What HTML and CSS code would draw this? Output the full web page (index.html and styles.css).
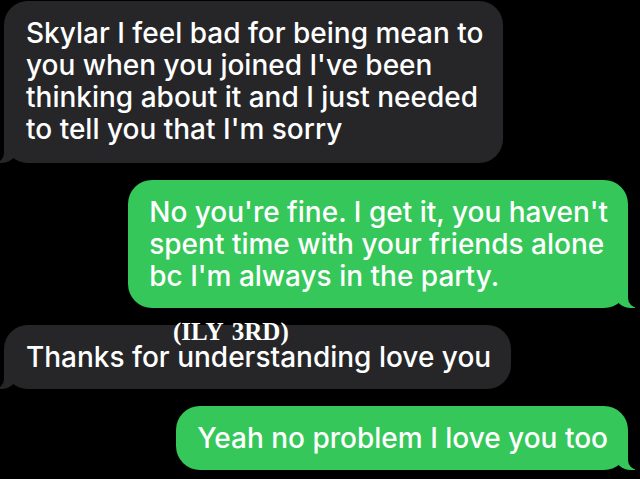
FILE: index.html
```html
<!DOCTYPE html>
<html lang="en">
<head>
  <meta charset="UTF-8">
  <title>Messages</title>
  <link rel="stylesheet" href="styles.css">
</head>
<body>
  <div class="thread">
    <div class="bubble received">
      Skylar I feel bad for being mean to<br>
      you when you joined I've been<br>
      thinking about it and I just needed<br>
      to tell you that I'm sorry
    </div>
    <div class="bubble sent">
      No you're fine. I get it, you haven't<br>
      spent time with your friends alone<br>
      bc I'm always in the party.
    </div>
    <div class="bubble received">
      <span class="caption">(ILY 3RD)</span>
      Thanks for understanding love you
    </div>
    <div class="bubble sent">
      Yeah no problem I love you too
    </div>
  </div>
</body>
</html>
```

FILE: styles.css
```css
html, body {
  margin: 0;
  background: #000;
}
body {
  font-family: Inter, 'Noto Sans', sans-serif;
  color: #fff;
  overflow: hidden;
}
.thread {
  display: flex;
  flex-direction: column;
  gap: 17px;
  padding: 1px 12px 0 4px;
}
.bubble {
  position: relative;
  font-size: 28px;
  font-weight: 500;
  line-height: 32px;
  padding: 16px 20px 16px 22px;
  border-radius: 24px;
  width: fit-content;
  white-space: nowrap;
}
.bubble:first-child {
  padding-bottom: 18px;
}
.received {
  background: #262628;
  align-self: flex-start;
}
.sent {
  background: #35c759;
  align-self: flex-end;
  padding-left: 21px;
}
/* tails */
.bubble::before,
.bubble::after {
  content: "";
  position: absolute;
  bottom: 0;
  height: 24px;
}
.received::before {
  left: -7px;
  width: 20px;
  background: #262628;
  border-bottom-right-radius: 16px 14px;
}
.received::after {
  left: -26px;
  width: 26px;
  background: #000;
  border-bottom-right-radius: 10px;
}
.sent::before {
  right: -7px;
  width: 20px;
  background: #35c759;
  border-bottom-left-radius: 16px 14px;
}
.sent::after {
  right: -26px;
  width: 26px;
  background: #000;
  border-bottom-left-radius: 10px;
}
.caption {
  position: absolute;
  left: 169px;
  top: -3px;
  font-family: 'Liberation Serif', serif;
  font-weight: bold;
  font-size: 25px;
  line-height: 20px;
  word-spacing: 3px;
}
```
